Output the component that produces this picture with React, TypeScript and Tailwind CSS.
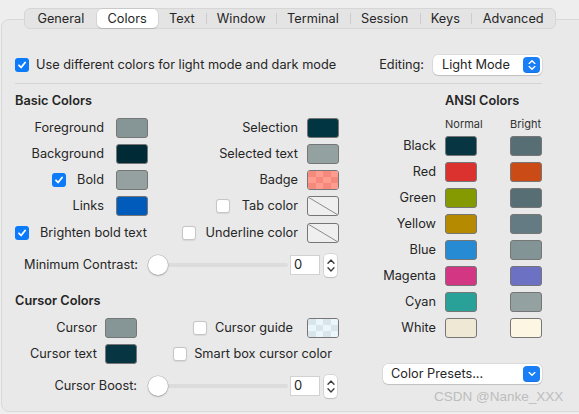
import React from "react";

const tabs: [string, string][] = [
  ["General", "w-[72px]"],
  ["Colors", "w-[61px]"],
  ["Text", "w-[49px]"],
  ["Window", "w-[70px]"],
  ["Terminal", "w-[74px]"],
  ["Session", "w-[70px]"],
  ["Keys", "w-[52px]"],
  ["Advanced", "w-[84px]"],
];

const Checkbox = ({ checked }: { checked?: boolean }) =>
  checked ? (
    <span className="flex h-[14px] w-[14px] shrink-0 items-center justify-center rounded-[3px] bg-[#0b7bf9]">
      <svg width="10" height="10" viewBox="0 0 10 10">
        <path d="M2 5.3 4.1 7.5 8.1 2.5" fill="none" stroke="white" strokeWidth="1.8" strokeLinecap="round" strokeLinejoin="round" />
      </svg>
    </span>
  ) : (
    <span className="h-[14px] w-[14px] shrink-0 rounded-[3px] border border-[#c6c6c6] bg-white shadow-[0_0.5px_1px_rgba(0,0,0,0.08)]" />
  );

const Swatch = ({ color }: { color: string }) => (
  <span className={`h-[20px] w-[32px] shrink-0 rounded-[3px] border border-[#767676] ${color}`} />
);

const EmptySwatch = () => (
  <span className="h-[20px] w-[32px] shrink-0 overflow-hidden rounded-[3px] border border-[#767676] bg-[#efefef]">
    <svg width="30" height="18" viewBox="0 0 30 18">
      <line x1="0" y1="0" x2="30" y2="18" stroke="#8a8a8a" strokeWidth="1" />
    </svg>
  </span>
);

const CheckerSwatch = ({ a, b }: { a: string; b: string }) => (
  <span className="grid h-[20px] w-[32px] shrink-0 grid-cols-4 grid-rows-3 overflow-hidden rounded-[3px] border border-[#767676]">
    {Array.from({ length: 12 }).map((_, i) => {
      const r = Math.floor(i / 4);
      const c = i % 4;
      return <span key={i} className={(r + c) % 2 === 0 ? a : b} />;
    })}
  </span>
);

const Stepper = () => (
  <span className="flex h-[23px] w-[13px] shrink-0 flex-col items-center justify-center gap-[3px] rounded-[4px] bg-white shadow-[0_0_0_0.5px_rgba(0,0,0,0.15),0_1px_1px_rgba(0,0,0,0.12)]">
    <svg width="8" height="5" viewBox="0 0 8 5">
      <path d="M1 4.2 4 1 7 4.2" fill="none" stroke="#3a3a3a" strokeWidth="1.3" strokeLinecap="round" strokeLinejoin="round" />
    </svg>
    <svg width="8" height="5" viewBox="0 0 8 5">
      <path d="M1 0.8 4 4 7 0.8" fill="none" stroke="#3a3a3a" strokeWidth="1.3" strokeLinecap="round" strokeLinejoin="round" />
    </svg>
  </span>
);

const SliderField = () => (
  <>
    <span className="relative flex h-[20px] w-[140px] shrink-0 items-center">
      <span className="ml-[10px] h-[4px] flex-1 rounded-full bg-[#dcdcdc]" />
      <span className="absolute left-0 top-0 h-[20px] w-[20px] rounded-full bg-white shadow-[0_0_0_0.5px_rgba(0,0,0,0.2),0_1px_2px_rgba(0,0,0,0.2)]" />
    </span>
    <span className="ml-[2px] flex h-[20px] w-[30px] shrink-0 items-center border border-[#d2d2d2] bg-white pl-[3px] text-[13px]">
      0
    </span>
    <span className="ml-[4px]">
      <Stepper />
    </span>
  </>
);

const BlueButton = ({ both }: { both?: boolean }) => (
  <span className="flex h-[16px] w-[17px] flex-col items-center justify-center gap-[2px] rounded-[4px] bg-[#1a7ef7] shadow-[inset_0_-1px_0_rgba(0,0,0,0.08)]">
    {both && (
      <svg width="8" height="4" viewBox="0 0 8 4">
        <path d="M1.2 3.5 4 0.8 6.8 3.5" fill="none" stroke="white" strokeWidth="1.4" strokeLinecap="round" strokeLinejoin="round" />
      </svg>
    )}
    <svg width="8" height="4" viewBox="0 0 8 4">
      <path d="M1.2 0.5 4 3.2 6.8 0.5" fill="none" stroke="white" strokeWidth="1.4" strokeLinecap="round" strokeLinejoin="round" />
    </svg>
  </span>
);

const ansi: [string, string, string][] = [
  ["Black", "bg-[#073642]", "bg-[#586e75]"],
  ["Red", "bg-[#dc322f]", "bg-[#cb4b16]"],
  ["Green", "bg-[#859900]", "bg-[#586e75]"],
  ["Yellow", "bg-[#b58900]", "bg-[#657b83]"],
  ["Blue", "bg-[#268bd2]", "bg-[#839496]"],
  ["Magenta", "bg-[#d33682]", "bg-[#6c71c4]"],
  ["Cyan", "bg-[#2aa198]", "bg-[#93a1a1]"],
  ["White", "bg-[#eee8d5]", "bg-[#fdf6e3]"],
];

export default function App() {
  return (
    <div className="relative h-[414px] w-[579px] overflow-hidden bg-[#eeeeee] pt-[8px] font-['Inter','Noto_Sans',sans-serif] text-[12.75px] text-[#262626]">
      {/* tab bar */}
      <div className="relative z-10 ml-[24px] flex h-[21px] w-[532px] items-center rounded-[6px] border border-[#d6d6d6] bg-[#e4e4e4]">
        {tabs.map(([name, w], i) => {
          const selected = name === "Colors";
          const sep = i >= 3;
          return (
            <div
              key={name}
              className={`relative flex h-full items-center justify-center ${w} ${
                sep
                  ? "before:absolute before:left-0 before:top-[4px] before:h-[11px] before:w-px before:bg-[#cdcdcd]"
                  : ""
              }`}
            >
              {selected ? (
                <span className="flex h-[19px] w-full items-center justify-center rounded-[5px] bg-white shadow-[0_0_0_0.5px_rgba(0,0,0,0.12),0_1px_1px_rgba(0,0,0,0.1)]">
                  {name}
                </span>
              ) : (
                name
              )}
            </div>
          );
        })}
      </div>

      {/* panel */}
      <div className="-mt-[10px] ml-[1px] h-[393px] w-[600px] rounded-[8px] border border-[#d9d9d9] bg-[#e9e9e9] pl-[13px] pt-[34px]">
        <div className="flex h-[22px] w-[527px] items-center">
          <Checkbox checked />
          <span className="ml-[7px]">Use different colors for light mode and dark mode</span>
          <span className="ml-auto">Editing:</span>
          <span className="ml-[9px] flex h-[20px] w-[109px] items-center justify-between rounded-[5px] bg-white pl-[9px] pr-[2px] shadow-[0_0_0_0.5px_rgba(0,0,0,0.12),0_1px_1px_rgba(0,0,0,0.12)]">
            Light Mode
            <BlueButton both />
          </span>
        </div>
        <div className="mt-[7px] h-px w-[527px] bg-[#d5d5d5]" />

        <div className="flex">
          {/* left column */}
          <div className="w-[361px]">
            <div className="mt-[9px] flex h-[16px] items-center font-semibold">Basic Colors</div>
            <div className="mt-[6px]">
              <div className="flex h-[26px] items-center">
                <div className="flex w-[133px] items-center justify-end gap-[12px]">
                  Foreground <Swatch color="bg-[#869596]" />
                </div>
                <div className="flex w-[191px] items-center justify-end gap-[9px]">
                  Selection <Swatch color="bg-[#003541]" />
                </div>
              </div>
              <div className="flex h-[26px] items-center">
                <div className="flex w-[133px] items-center justify-end gap-[12px]">
                  Background <Swatch color="bg-[#002b36]" />
                </div>
                <div className="flex w-[191px] items-center justify-end gap-[9px]">
                  Selected text <Swatch color="bg-[#93a1a1]" />
                </div>
              </div>
              <div className="flex h-[26px] items-center">
                <div className="flex w-[133px] items-center justify-end">
                  <Checkbox checked />
                  <span className="ml-[11px]">Bold</span>
                  <span className="ml-[12px] flex">
                    <Swatch color="bg-[#95a0a0]" />
                  </span>
                </div>
                <div className="flex w-[191px] items-center justify-end gap-[9px]">
                  Badge <CheckerSwatch a="bg-[#f4897c]" b="bg-[#ff9c90]" />
                </div>
              </div>
              <div className="flex h-[26px] items-center">
                <div className="flex w-[133px] items-center justify-end gap-[12px]">
                  Links <Swatch color="bg-[#005bbb]" />
                </div>
                <div className="flex w-[191px] items-center justify-end">
                  <Checkbox />
                  <span className="ml-[12px]">Tab color</span>
                  <span className="ml-[9px] flex">
                    <EmptySwatch />
                  </span>
                </div>
              </div>
              <div className="flex h-[28px] items-center">
                <div className="flex w-[133px] items-center">
                  <Checkbox checked />
                  <span className="ml-[11px] whitespace-nowrap">Brighten bold text</span>
                </div>
                <div className="flex w-[191px] items-center justify-end">
                  <Checkbox />
                  <span className="ml-[10px]">Underline color</span>
                  <span className="ml-[9px] flex">
                    <EmptySwatch />
                  </span>
                </div>
              </div>
              <div className="mt-[2px] flex h-[32px] items-center">
                <div className="flex w-[123px] justify-end">Minimum Contrast:</div>
                <span className="ml-[10px] flex items-center">
                  <SliderField />
                </span>
              </div>
            </div>

            <div className="mt-[12px] flex h-[16px] items-center font-semibold">Cursor Colors</div>
            <div className="mt-[6px]">
              <div className="flex h-[26px] items-center">
                <div className="flex w-[122px] items-center justify-end gap-[8px]">
                  Cursor <Swatch color="bg-[#869596]" />
                </div>
                <div className="flex w-[202px] items-center justify-end">
                  <Checkbox />
                  <span className="ml-[8px]">Cursor guide</span>
                  <span className="ml-[14px] flex">
                    <CheckerSwatch a="bg-[#d8e6ec]" b="bg-[#eaf6fb]" />
                  </span>
                </div>
              </div>
              <div className="flex h-[26px] items-center">
                <div className="flex w-[122px] items-center justify-end gap-[8px]">
                  Cursor text <Swatch color="bg-[#073642]" />
                </div>
                <div className="flex w-[202px] items-center justify-end pr-[7px]">
                  <Checkbox />
                  <span className="ml-[7px] whitespace-nowrap">Smart box cursor color</span>
                </div>
              </div>
              <div className="mt-[3px] flex h-[32px] items-center">
                <div className="flex w-[122px] justify-end">Cursor Boost:</div>
                <span className="ml-[11px] flex items-center">
                  <SliderField />
                </span>
              </div>
            </div>
          </div>

          {/* ANSI column */}
          <div className="w-[170px]">
            <div className="ml-[69px] mt-[9px] flex h-[16px] items-center font-semibold">ANSI Colors</div>
            <div className="mt-[8px] flex h-[14px] items-center text-[11px] text-[#333]">
              <span className="ml-[69px] w-[65px]">Normal</span>
              <span>Bright</span>
            </div>
            <div className="mt-[2px]">
              {ansi.map(([name, n, b]) => (
                <div key={name} className="flex h-[26px] items-center">
                  <span className="w-[60px] text-right">{name}</span>
                  <span className="ml-[9px] flex">
                    <Swatch color={n} />
                  </span>
                  <span className="ml-[33px] flex">
                    <Swatch color={b} />
                  </span>
                </div>
              ))}
            </div>
            <div className="ml-[7px] mt-[23px] flex h-[20px] w-[159px] items-center justify-between rounded-[5px] bg-white pl-[8px] pr-[2px] shadow-[0_0_0_0.5px_rgba(0,0,0,0.12),0_1px_1px_rgba(0,0,0,0.12)]">
              Color Presets...
              <BlueButton />
            </div>
          </div>
        </div>
      </div>

      <span className="absolute left-[434px] top-[388px] font-['Liberation_Sans',sans-serif] text-[13.5px] leading-[18px] text-[#bdbdbd]">
        CSDN @Nanke_XXX
      </span>
    </div>
  );
}
